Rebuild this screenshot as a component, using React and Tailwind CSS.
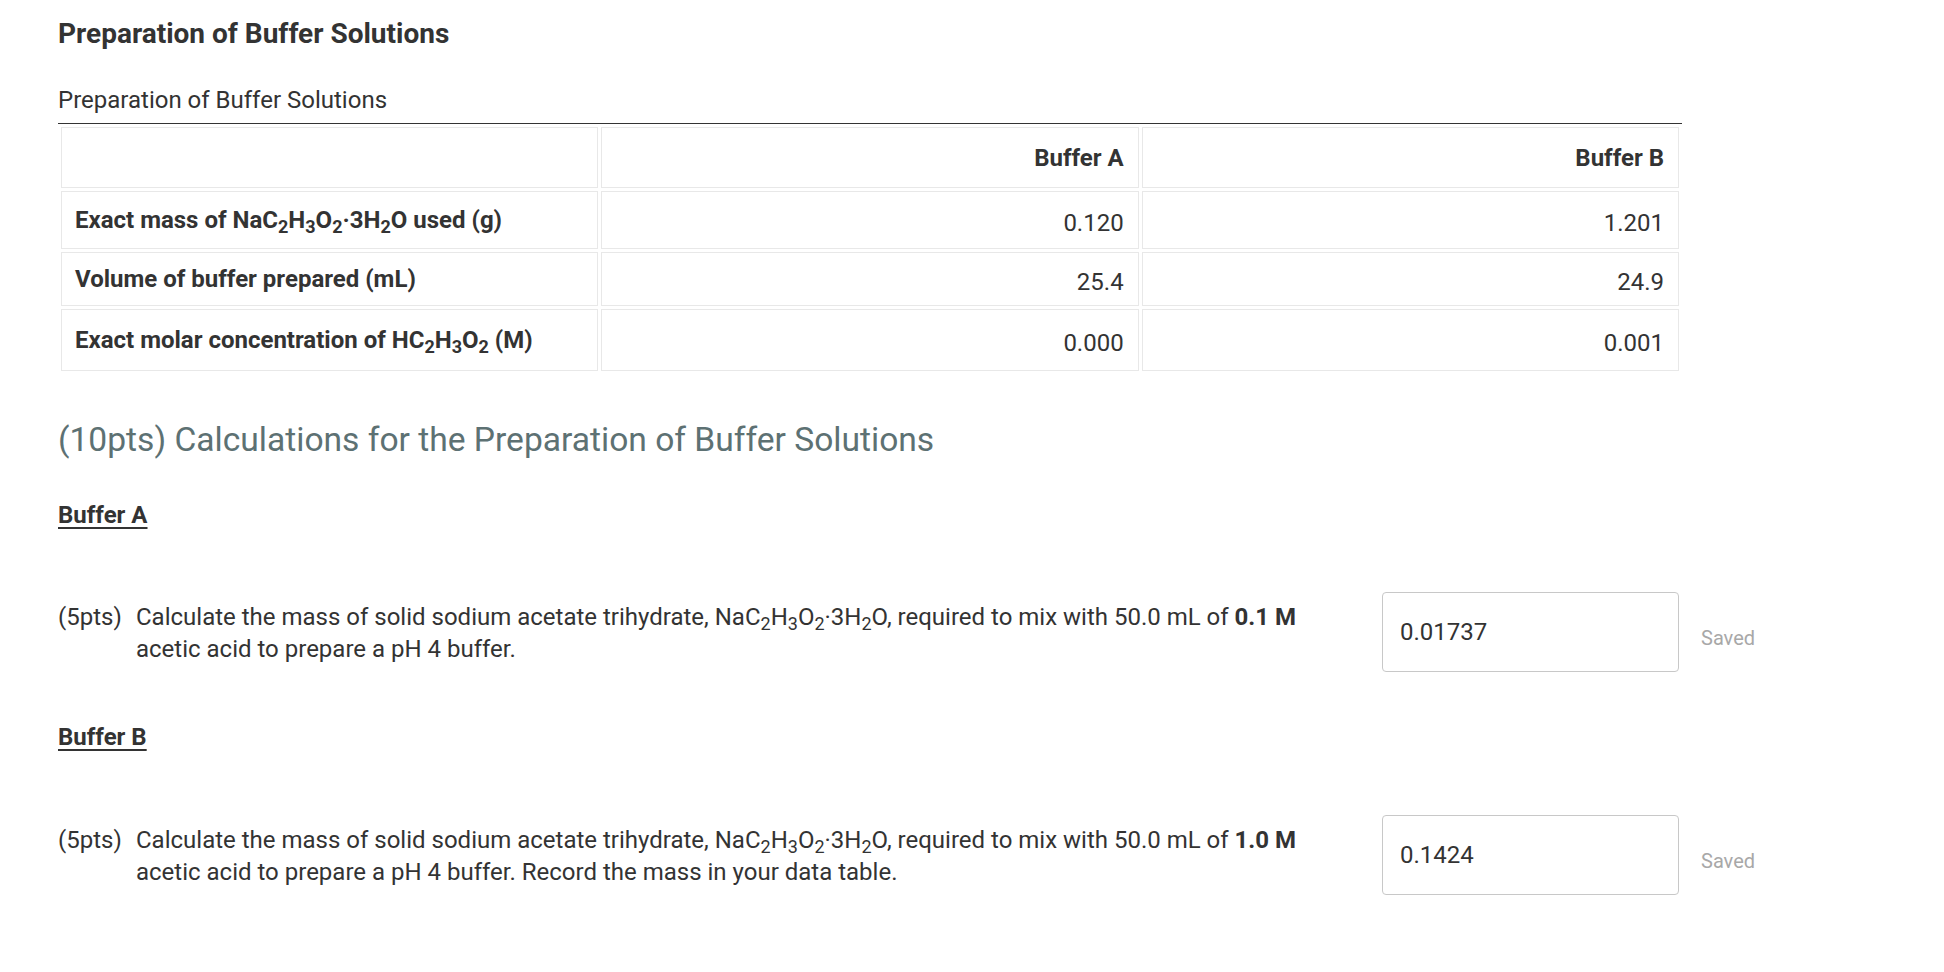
import React from 'react';

const Formula = () => (
  <>
    NaC<sub>2</sub>H<sub>3</sub>O<sub>2</sub>·3H<sub>2</sub>O
  </>
);

const rows = [
  {
    label: (
      <>
        Exact mass of <Formula /> used (g)
      </>
    ),
    a: '0.120',
    b: '1.201',
    h: 'h-[58px]',
  },
  { label: 'Volume of buffer prepared (mL)', a: '25.4', b: '24.9', h: 'h-[54px]' },
  {
    label: (
      <>
        Exact molar concentration of HC<sub>2</sub>H<sub>3</sub>O<sub>2</sub> (M)
      </>
    ),
    a: '0.000',
    b: '0.001',
    h: 'h-[62px]',
  },
];

function Question({ children, value }) {
  return (
    <div className="flex items-center">
      <div className="flex w-[1324px] pt-[2px] text-[24px] leading-[32px] text-[#333]">
        <span className="w-[78px] shrink-0">(5pts)</span>
        <p className="w-[1200px]">{children}</p>
      </div>
      <div className="w-[297px] h-[80px] border border-[#c8c8c8] rounded-[4px] flex items-center px-[17px] text-[24px] text-[#333]">
        {value}
      </div>
      <span className="ml-[22px] mt-[12px] text-[20px] text-[#a8a8a8]">Saved</span>
    </div>
  );
}

export default function App() {
  return (
    <div className="min-h-screen bg-white px-[58px] pt-[17px] font-['Roboto',sans-serif] text-[#333]">
      {/* Title */}
      <h1 className="text-[28px] leading-[34px] font-bold">Preparation of Buffer Solutions</h1>

      {/* Data table */}
      <div className="w-[1624px] mt-[34px]">
        <div className="text-[24px] leading-[30px] pb-[8px] border-b border-[#333]">
          Preparation of Buffer Solutions
        </div>
        <table className="w-full table-fixed border-separate border-spacing-[3px]">
          <thead>
            <tr>
              <td className="h-[61px] border border-[#e8e8e8]"></td>
              <th className="h-[61px] border border-[#e8e8e8] px-[14px] text-right text-[24px] font-bold">Buffer A</th>
              <th className="h-[61px] border border-[#e8e8e8] px-[14px] text-right text-[24px] font-bold">Buffer B</th>
            </tr>
          </thead>
          <tbody>
            {rows.map((r, i) => (
              <tr key={i}>
                <th className={`${r.h} border border-[#e8e8e8] px-[13px] text-left text-[24px] font-bold`}>{r.label}</th>
                <td className={`${r.h} border border-[#e8e8e8] px-[14px] pt-[5px] text-right text-[24px]`}>{r.a}</td>
                <td className={`${r.h} border border-[#e8e8e8] px-[14px] pt-[5px] text-right text-[24px]`}>{r.b}</td>
              </tr>
            ))}
          </tbody>
        </table>
      </div>

      {/* Calculations */}
      <h2 className="mt-[46px] text-[33.6px] leading-[40px] text-[#5d7173]">
        (10pts) Calculations for the Preparation of Buffer Solutions
      </h2>

      <h3 className="mt-[40px] text-[24px] leading-[30px] font-bold underline underline-offset-[4px]">Buffer A</h3>
      <div className="mt-[62px]">
        <Question value="0.01737">
          Calculate the mass of solid sodium acetate trihydrate, <Formula />, required to mix with 50.0 mL of{' '}
          <b>0.1 M</b> acetic acid to prepare a pH 4 buffer.
        </Question>
      </div>

      <h3 className="mt-[50px] text-[24px] leading-[30px] font-bold underline underline-offset-[4px]">Buffer B</h3>
      <div className="mt-[63px]">
        <Question value="0.1424">
          Calculate the mass of solid sodium acetate trihydrate, <Formula />, required to mix with 50.0 mL of{' '}
          <b>1.0 M</b> acetic acid to prepare a pH 4 buffer. Record the mass in your data table.
        </Question>
      </div>
    </div>
  );
}
